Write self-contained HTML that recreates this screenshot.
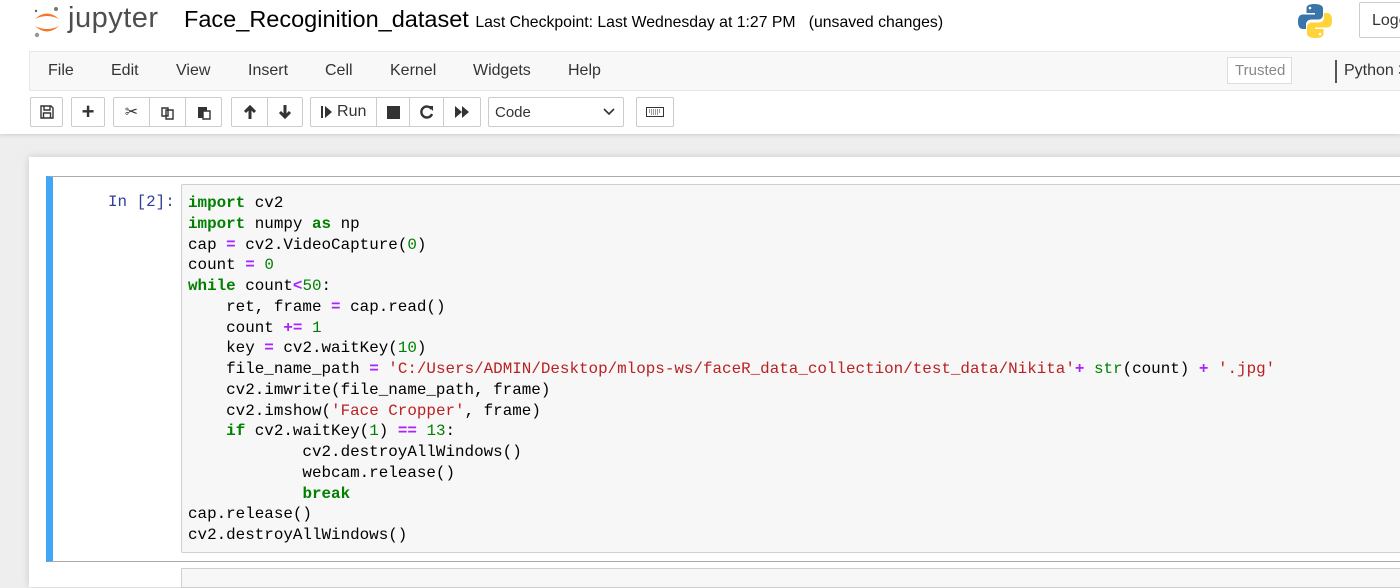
<!DOCTYPE html>
<html><head><style>
*{box-sizing:border-box;margin:0;padding:0}
body{width:1400px;height:577px;overflow:hidden;background:#eee;font-family:"Liberation Sans",sans-serif;position:relative}
.abs{position:absolute}
#hdr{left:0;top:0;width:1400px;height:134px;background:#fff;box-shadow:0 1px 4px rgba(0,0,0,.15)}
.menu{left:29px;top:51px;width:1380px;height:40px;background:#f8f8f8;border:1px solid #e7e7e7;border-right:none}
.menu span{position:absolute;top:10px;font-size:16px;color:#333}
.btn{position:absolute;top:97px;height:30px;border:1px solid #ccc;border-radius:2px;background:#fff;font-size:16px;color:#333;display:flex;align-items:center;justify-content:center}
.grp{position:absolute;top:97px;height:30px;display:flex}
.grp .b{border:1px solid #ccc;margin-left:-1px;background:#fff;height:30px;display:flex;align-items:center;justify-content:center;font-size:16px;color:#333}
.grp .b:first-child{border-radius:2px 0 0 2px;margin-left:0}
.grp .b:last-child{border-radius:0 2px 2px 0}
pre{font-family:"Liberation Mono",monospace;font-size:15.9px;line-height:20.75px;color:#000}
.k{color:#008000;font-weight:bold}.o{color:#aa22ff;font-weight:bold}.n{color:#008000}.s{color:#ba2121}.bi{color:#008000}
</style></head><body>
<div id="hdr" class="abs"></div>
<svg class="abs" style="left:32px;top:5px" width="30" height="34" viewBox="0 0 30 34">
<path d="M3 14 Q15 3 27 14 Q15 8 3 14Z" fill="#f37726"/>
<path d="M3 21 Q15 32 27 21 Q15 27 3 21Z" fill="#f37726"/>
<circle cx="24" cy="4" r="2" fill="#767677"/><circle cx="5" cy="30" r="2.2" fill="#989798"/><circle cx="4" cy="6" r="1.2" fill="#616262"/>
</svg>
<div class="abs" style="left:68px;top:2px;font-size:29px;color:#4e4e4e;letter-spacing:0.5px">jupyter</div>
<div class="abs" style="left:184px;top:6px;font-size:23.5px;color:#000">Face_Recoginition_dataset <span style="font-size:15.8px">Last Checkpoint: Last Wednesday at 1:27 PM &nbsp; (unsaved changes)</span></div>
<svg class="abs" style="left:1297px;top:3px" width="36" height="36" viewBox="0 0 36 36">
<path d="M17.5 1c-8 0-8 3.5-8 4.5V10h8.5v1.5H6C2.5 11.5 1 14 1 18.5S2.5 26 6 26h3v-4.5c0-3 2.5-5 5.5-5h7c2.5 0 4.5-2 4.5-4.5V5.5C26 3 23.5 1 17.5 1z" fill="#3a75a8"/>
<path d="M18.5 35c8 0 8-3.5 8-4.5V26H18v-1.5h12c3.5 0 5-2.5 5-7S33.5 10 30 10h-3v4.5c0 3-2.5 5-5.5 5h-7C12 19.5 10 21.5 10 24v6.5c0 2.5 2.5 4.5 8.5 4.5z" fill="#ffd43b"/>
<circle cx="13" cy="5" r="1.3" fill="#fff"/><circle cx="23" cy="31" r="1.3" fill="#fff"/>
</svg>
<div class="abs" style="left:1359px;top:2px;width:60px;height:36px;border:1px solid #ccc;border-radius:2px;font-size:16px;padding:9px 0 0 12px;color:#333">Logout</div>
<div class="abs menu">
<span style="left:18px">File</span><span style="left:81px">Edit</span><span style="left:146px">View</span><span style="left:218px">Insert</span><span style="left:295px">Cell</span><span style="left:360px">Kernel</span><span style="left:443px">Widgets</span><span style="left:538px">Help</span>
<div class="abs" style="left:1197px;top:5px;width:65px;height:27px;border:1px solid #ddd;background:#fff;font-size:15px;color:#888;padding:4px 0 0 7px">Trusted</div>
<div class="abs" style="left:1305px;top:8px;width:2px;height:23px;background:#555"></div>
<span style="left:1314px">Python 3</span>
</div>
<div class="btn" style="left:30px;width:33px"><svg width="14" height="14" viewBox="0 0 14 14"><path d="M1 1h10l2 2v10H1z M4 1v4h6V1 M3.5 8h7v5h-7z" fill="none" stroke="#333" stroke-width="1.4"/></svg></div>
<div class="btn" style="left:71px;width:34px;font-weight:bold;font-size:22px">+</div>
<div class="grp" style="left:113px"><div class="b" style="width:37px">✂</div><div class="b" style="width:37px"><svg width="14" height="15" viewBox="0 0 14 15"><path d="M1 3h6v8H1z M5 5h7v9H5z" fill="#fff" stroke="#333" stroke-width="1.4"/></svg></div><div class="b" style="width:37px"><svg width="14" height="15" viewBox="0 0 14 15"><path d="M1 2h9v11H1z" fill="#333"/><path d="M6 6h7v8H6z" fill="#fff" stroke="#333" stroke-width="1.4"/></svg></div></div>
<div class="grp" style="left:231px"><div class="b" style="width:37px"><svg width="14" height="16" viewBox="0 0 14 16"><path d="M7 15V3M2 8l5-5 5 5" fill="none" stroke="#333" stroke-width="3"/></svg></div><div class="b" style="width:36px"><svg width="14" height="16" viewBox="0 0 14 16"><path d="M7 1v12M2 8l5 5 5-5" fill="none" stroke="#333" stroke-width="3"/></svg></div></div>
<div class="grp" style="left:310px"><div class="b" style="width:67px"><svg width="12" height="14" viewBox="0 0 12 14"><path d="M1 1v12" stroke="#333" stroke-width="2"/><path d="M4 1l7 6-7 6z" fill="#333"/></svg>&nbsp;Run</div><div class="b" style="width:34px"><div style="width:13px;height:13px;background:#333"></div></div><div class="b" style="width:35px"><svg width="14" height="14" viewBox="0 0 14 14"><path d="M11.5 4A5.5 5.5 0 1 0 12 9" fill="none" stroke="#333" stroke-width="2.4"/><path d="M8 1h5v5z" fill="#333"/></svg></div><div class="b" style="width:38px"><svg width="16" height="14" viewBox="0 0 16 14"><path d="M1 1l7 6-7 6zM8 1l7 6-7 6z" fill="#333"/></svg></div></div>
<div class="btn" style="left:488px;width:136px;justify-content:space-between;padding:0 8px 0 6px;font-size:15px">Code<svg width="12" height="8"><path d="M1 1l5 5 5-5" fill="none" stroke="#333" stroke-width="1.6"/></svg></div>
<div class="btn" style="left:636px;width:38px"><svg width="18" height="10"><rect x="0.5" y="0.5" width="17" height="9" fill="none" stroke="#333"/><path d="M3 3h12M3 5h12M5 7h8" stroke="#333" stroke-dasharray="1 1"/></svg></div>
<div class="abs" style="left:29px;top:157px;width:1380px;height:430px;background:#fff;box-shadow:0 0 8px rgba(0,0,0,.15)"></div>
<div class="abs" style="left:46px;top:176px;width:1360px;height:386px;border:1px solid #ababab;border-left:7px solid #42a5f5"></div>
<div class="abs" style="left:108px;top:193px;font-family:'Liberation Mono',monospace;font-size:15.9px;color:#303f9f">In [2]:</div>
<div class="abs" style="left:181px;top:184px;width:1230px;height:369px;background:#f7f7f7;border:1px solid #cfcfcf;border-radius:2px;padding:8px 0 0 6px">
<pre><span class="k">import</span> cv2
<span class="k">import</span> numpy <span class="k">as</span> np
cap <span class="o">=</span> cv2.VideoCapture(<span class="n">0</span>)
count <span class="o">=</span> <span class="n">0</span>
<span class="k">while</span> count<span class="o">&lt;</span><span class="n">50</span>:
    ret, frame <span class="o">=</span> cap.read()
    count <span class="o">+=</span> <span class="n">1</span>
    key <span class="o">=</span> cv2.waitKey(<span class="n">10</span>)
    file_name_path <span class="o">=</span> <span class="s">'C:/Users/ADMIN/Desktop/mlops-ws/faceR_data_collection/test_data/Nikita'</span><span class="o">+</span> <span class="bi">str</span>(count) <span class="o">+</span> <span class="s">'.jpg'</span>
    cv2.imwrite(file_name_path, frame)
    cv2.imshow(<span class="s">'Face Cropper'</span>, frame)
    <span class="k">if</span> cv2.waitKey(<span class="n">1</span>) <span class="o">==</span> <span class="n">13</span>:
            cv2.destroyAllWindows()
            webcam.release()
            <span class="k">break</span>
cap.release()
cv2.destroyAllWindows()</pre>
</div>
<div class="abs" style="left:181px;top:568px;width:1230px;height:20px;background:#f7f7f7;border:1px solid #cfcfcf"></div>
</body></html>
